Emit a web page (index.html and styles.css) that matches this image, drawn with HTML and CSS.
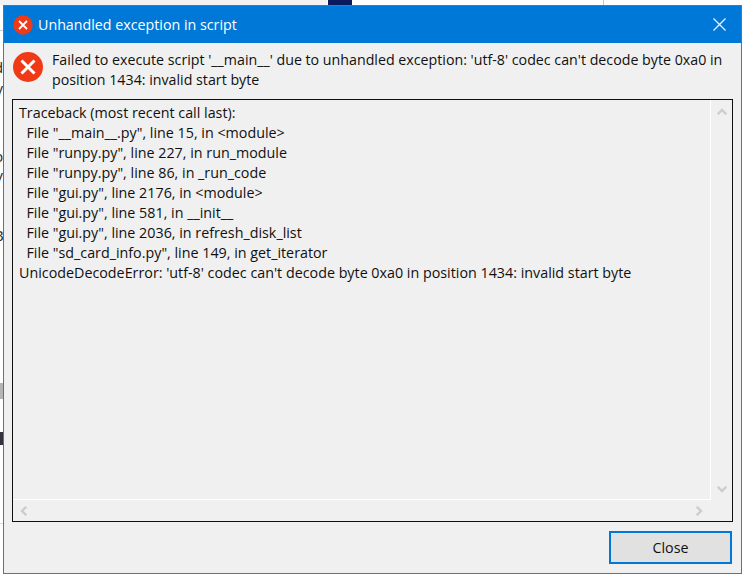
FILE: index.html
```html
<!DOCTYPE html>
<html lang="en">
<head>
<meta charset="utf-8">
<title>Unhandled exception in script</title>
<link rel="stylesheet" href="styles.css">
</head>
<body>
<div class="desktop">
  <div class="bit bit-strip"></div>
  <div class="bit bit-navy"></div>
  <div class="bit bit-line-b"></div>
  <div class="bit bit-rule-top"></div>
  <div class="bit bit-grey"></div>
  <div class="bit bit-dark"></div>
  <div class="bit bit-rule"></div>
  <span class="peek peek-d">d</span>
  <span class="peek peek-y">y</span>
  <span class="peek peek-p">p</span>
  <span class="peek peek-v">V</span>
  <span class="peek peek-b">B</span>

  <div class="dialog">
    <header class="titlebar">
      <svg class="title-icon" viewBox="0 0 20 20" aria-hidden="true">
        <circle cx="10" cy="10" r="9.7" fill="#f03a17"/>
        <path d="M6 6l8 8M14 6l-8 8" stroke="#fff" stroke-width="1.8" fill="none"/>
      </svg>
      <span class="title-text">Unhandled exception in script</span>
      <svg class="close-x" viewBox="0 0 13 13" aria-hidden="true">
        <path d="M.5.5l12 12M12.5.5l-12 12" stroke="#fff" stroke-width="1.1" fill="none"/>
      </svg>
    </header>

    <div class="body">
      <div class="message">
        <svg class="msg-icon" viewBox="0 0 30 30" aria-hidden="true">
          <circle cx="15" cy="15" r="15" fill="#f03a17"/>
          <path d="M8.5 8.5l13 13M21.5 8.5l-13 13" stroke="#fff" stroke-width="3" fill="none"/>
        </svg>
        <p class="msg-text">Failed to execute script '__main__' due to unhandled exception: 'utf-8' codec can't decode byte 0xa0 in position 1434: invalid start byte</p>
      </div>

      <div class="textbox">
        <div class="text-row">
          <pre class="trace">Traceback (most recent call last):
  File "__main__.py", line 15, in &lt;module&gt;
  File "runpy.py", line 227, in run_module
  File "runpy.py", line 86, in _run_code
  File "gui.py", line 2176, in &lt;module&gt;
  File "gui.py", line 581, in __init__
  File "gui.py", line 2036, in refresh_disk_list
  File "sd_card_info.py", line 149, in get_iterator
UnicodeDecodeError: 'utf-8' codec can't decode byte 0xa0 in position 1434: invalid start byte</pre>
          <div class="vscroll">
            <svg class="arrow" viewBox="0 0 10 7" aria-hidden="true"><path d="M.8 6.200L5 2l4.200 4.200" stroke="#cdcdcd" stroke-width="2.400" fill="none"/></svg>
            <svg class="arrow" viewBox="0 0 10 7" aria-hidden="true"><path d="M.8.8L5 5 9.200.8" stroke="#cdcdcd" stroke-width="2.400" fill="none"/></svg>
          </div>
        </div>
        <div class="hscroll">
          <svg class="arrow-h" viewBox="0 0 7 10" aria-hidden="true"><path d="M6.200.8L2 5l4.200 4.200" stroke="#cdcdcd" stroke-width="2.400" fill="none"/></svg>
          <svg class="arrow-h" viewBox="0 0 7 10" aria-hidden="true"><path d="M.8.8L5 5 .8 9.200" stroke="#cdcdcd" stroke-width="2.400" fill="none"/></svg>
        </div>
      </div>

      <div class="actions">
        <button class="close-btn" type="button">Close</button>
      </div>
    </div>
  </div>
</div>
</body>
</html>
```
FILE: styles.css
```css
* { box-sizing: border-box; }
html, body { margin: 0; padding: 0; }
body {
  width: 747px;
  height: 585px;
  background: #fff;
  overflow: hidden;
  font-family: "Open Sans", "Noto Sans", sans-serif;
  color: #101010;
}
.desktop { position: relative; width: 747px; height: 585px; overflow: hidden; }

.bit { position: absolute; }
.bit-strip { left: 0; top: 0; width: 327px; height: 5px; background: #f2f2f2; }
.bit-navy { left: 328px; top: 0; width: 24px; height: 5px; background: #0b1a5c; }
.bit-line-b { left: 603px; top: 0; width: 1px; height: 5px; background: #c8c8c8; }
.bit-rule-top { left: 0; top: 30px; width: 3px; height: 1px; background: #cfcfcf; }
.bit-grey { left: 0; top: 383px; width: 3px; height: 16px; background: #b4b4b4; }
.bit-dark { left: 0; top: 432px; width: 3px; height: 13px; background: #33333d; }
.bit-rule { left: 0; top: 523px; width: 3px; height: 1px; background: #d9d9d9; }

.peek {
  position: absolute;
  width: 9px;
  left: -6px;
  font-size: 15px;
  line-height: 20px;
  text-align: right;
  color: #2a2a2a;
}
.peek-d { top: 57px; }
.peek-y { top: 78px; }
.peek-p { top: 146px; }
.peek-v { top: 167px; }
.peek-b { top: 225px; }

.dialog {
  position: absolute;
  left: 3px;
  top: 5px;
  width: 739px;
  height: 569px;
  border: 1px solid #2a80cc;
  background: #f0f0f0;
  display: flex;
  flex-direction: column;
}
.titlebar {
  height: 37px;
  flex: none;
  background: #0078d7;
  color: #fff;
  display: flex;
  align-items: center;
  padding: 0 15px 0 9px;
  gap: 5px;
}
.title-icon { width: 20px; height: 20px; flex: none; }
.title-text { flex: 1; font-size: 14.25px; line-height: 20px; }
.close-x { width: 13px; height: 13px; flex: none; }

.body {
  flex: 1;
  display: flex;
  flex-direction: column;
  padding: 6px 8px 9px 8px;
}
.message { display: flex; gap: 9px; height: 50px; flex: none; padding-left: 1px; }
.msg-icon { width: 30px; height: 30px; flex: none; margin-top: 3px; }
.msg-text { margin: 0; font-size: 14.23px; line-height: 20px; padding-top: 1px; width: 680px; }

.textbox {
  height: 423px;
  flex: none;
  border: 1px solid #101010;
  display: flex;
  flex-direction: column;
}
.text-row { flex: 1; display: flex; min-height: 0; }
.trace {
  flex: 1;
  margin: 0;
  padding: 3px 0 0 6px;
  font-family: inherit;
  font-size: 14.3px;
  line-height: 20px;
  border-right: 1px solid #fff;
  border-bottom: 1px solid #fff;
  white-space: pre;
  overflow: hidden;
}
.vscroll {
  width: 21px;
  flex: none;
  display: flex;
  flex-direction: column;
  justify-content: space-between;
  align-items: center;
  padding: 8px 0 7px;
}
.arrow { width: 10px; height: 7px; }
.hscroll {
  height: 21px;
  flex: none;
  display: flex;
  justify-content: space-between;
  align-items: center;
  padding: 0 29px 0 7px;
}
.arrow-h { width: 7px; height: 10px; }

.actions { display: flex; justify-content: flex-end; margin-top: 9px; padding-right: 1px; }
.close-btn {
  width: 123px;
  height: 33px;
  border: 2px solid #0078d7;
  background: #e1e1e1;
  color: #101010;
  font-family: inherit;
  font-size: 14.25px;
  padding: 0;
}
```
